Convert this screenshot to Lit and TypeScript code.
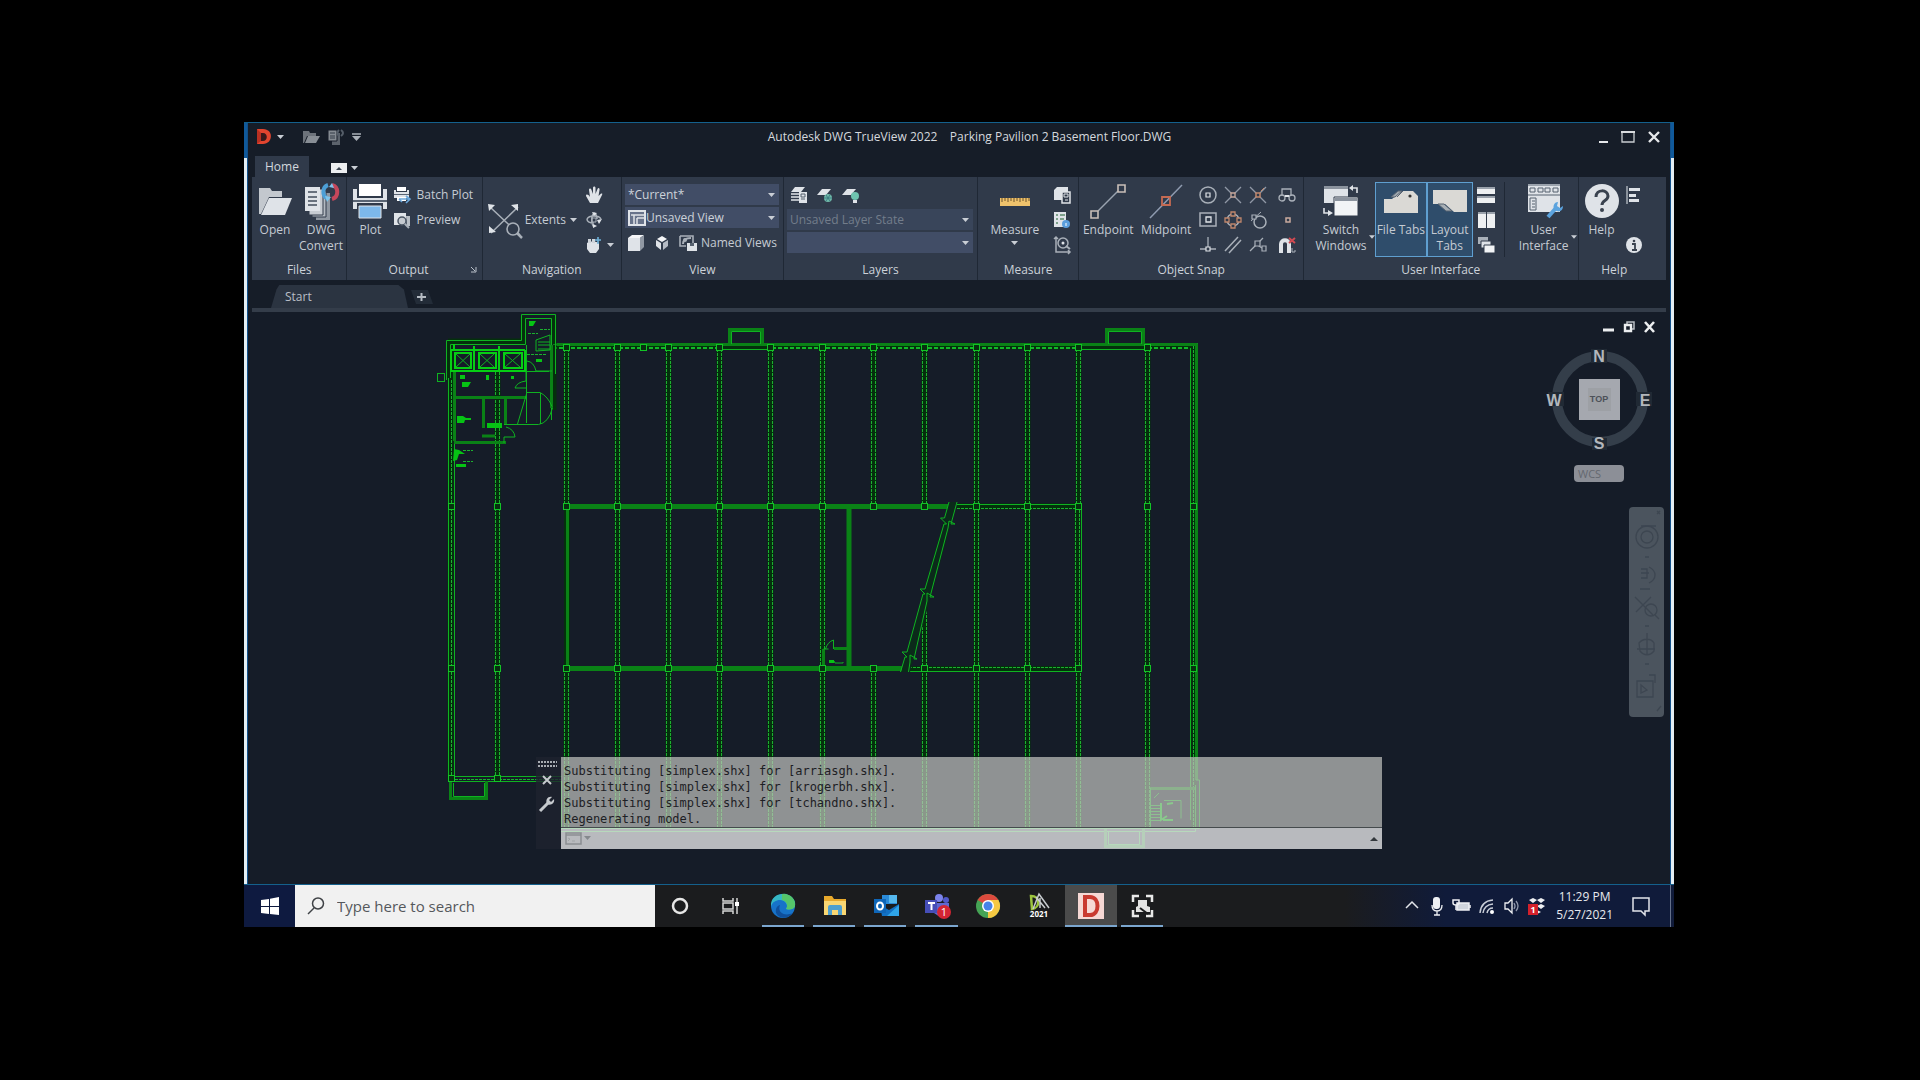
import { LitElement, html, svg, css, type TemplateResult, type SVGTemplateResult } from "lit";
import { customElement } from "lit/decorators.js";
import { classMap } from "lit/directives/class-map.js";

const W = "#dfe3e8";
const G = "#a9b0b9";
const DK = "#303a4a";
const ORANGE = "#c0876c";

/* Large ribbon icons, 36 x 36. Small ribbon icons, 18 x 18. */
const icons: Record<string, SVGTemplateResult> = {
  open: svg`<path d="M2 5h11l2 3h10v6H12L4 31H2z" fill="#c3c8ce"/><path d="M12 15h23l-7 17H4z" fill="${W}"/>`,
  convert: svg`<path d="M13 10h14v27H13z" fill="#8f97a1"/><path d="M9 8h14v26H9z" fill="#b4bac1" stroke="${DK}"/><path d="M6 6h14v26H6z" fill="#c7ccd2" stroke="${DK}"/><path d="M2 4h15v24H2z" fill="${W}"/>
    <path d="M5 9h9M5 14h9M5 18h9M5 22h9" stroke="#69727e" stroke-width="2"/>
    <path d="M25 2c-6 2-6 11-1 13" fill="none" stroke="#4c9fd6" stroke-width="4"/><path d="M29 2c7 2 7 12 0 14" fill="none" stroke="#c4475b" stroke-width="4"/><path d="M22 13l6 1-4 5zM31 5l-5-1 3-4z" fill="#7fc4ea"/>`,
  plot: svg`<path d="M7 1h22v12H7z" fill="#fff"/><path d="M1 6h4v9h26V6h4v20h-4v-6H5v6H1z" fill="${W}"/><path d="M1 17h34v2H1z" fill="#596473"/><path d="M7 23h22v12H7z" fill="#7db8ea" stroke="${W}"/>`,
  extents: svg`<path d="M3 5L33 33M31 5L4 31" stroke="${G}" stroke-width="1.5"/><path d="M1 2l7 1-6 6zM31 2v7l-7-6zM2 31v-7l7 6z" fill="${W}"/><circle cx="26" cy="27" r="6" fill="${DK}" stroke="${G}" stroke-width="1.6"/><path d="M30 31l5 5" stroke="${G}" stroke-width="2.5"/>`,
  measure: svg`<path d="M3 15h30v8H3z" fill="#f0c36c"/><path d="M5 15v4M8 15v3M11 15v4M14 15v3M17 15v4M20 15v3M23 15v4M26 15v3M29 15v4M32 15v3" stroke="#6e552a"/>`,
  endpoint: svg`<path d="M8 28L28 8" stroke="#9aa3b0" stroke-width="1.5"/><path d="M28 2h7v7h-7zM1 28h7v7H1z" fill="none" stroke="#c9bfb8" stroke-width="1.6"/>`,
  midpoint: svg`<path d="M2 35L34 2" stroke="#8f9bb0" stroke-width="1.5"/><path d="M14 14h8v8h-8z" fill="none" stroke="#c56a52" stroke-width="1.8"/>`,
  switch: svg`<path d="M1 3h24v17H1z" fill="${W}"/><path d="M1 3h24v3H1z" fill="#8b939e"/><path d="M11 14h24v19H11z" fill="#f2f4f6" stroke="${DK}"/><path d="M12 15h22v3H12z" fill="#8b939e"/><path d="M34 10V5h-6M1 25v5h6" fill="none" stroke="${W}" stroke-width="1.6"/><path d="M30 2v6l-4-3zM5 27v6l5-3z" fill="${W}"/>`,
  filetabs: svg`<path d="M1 30V16h8l9-8h12l5 5v17z" fill="#dad9d5"/><path d="M8 14l7-6h4l-7 6zM14 14l6-6" fill="#9da6ad" stroke="#566271"/><circle cx="27" cy="13" r="1.6" fill="#333"/>`,
  layouttabs: svg`<path d="M1 7h34v22H22l-9-8H1z" fill="#dad9d5"/><path d="M6 21h6l8 7h-6z" fill="#a7afb5" stroke="#566271"/>`,
  ui: svg`<path d="M2 1h32v28H2z" fill="${W}"/><path d="M2 1h32v2H2z" fill="#9aa2ac"/><path d="M4 5h5v4H4zM12 5h5v4h-5zM19 5h5v4h-5zM27 5h5v4h-5z" fill="none" stroke="#55606e"/><path d="M2 12h32" stroke="#55606e"/><path d="M4 15h6v12H4z" fill="none" stroke="#55606e"/><path d="M6 18h3M6 21h3M6 24h3" stroke="#55606e"/><path d="M22 34l8-9" stroke="#5ba3de" stroke-width="4"/><path d="M29 27c-3-3-1-8 3-8l-1 4 3 2 3-2c0 5-4 7-8 4z" fill="#5ba3de"/>`,
  help: svg`<circle cx="18" cy="18" r="17" fill="${W}"/><path d="M12 14c0-8 12-8 12-1 0 5-6 4-6 9" fill="none" stroke="#39424f" stroke-width="3"/><circle cx="18" cy="27" r="2" fill="#39424f"/>`,
  batch: svg`<path d="M4 1h9v4H4z" fill="#fff"/><path d="M1 4h2v2h11V4h2v8H1z" fill="${W}"/><path d="M1 8h15v1H1z" fill="#596473"/><path d="M4 11h9v4H4z" fill="#fff"/><path d="M6 13h10M13 10l4 3-4 4M9 16l-3-3" stroke="#6ba8dc" stroke-width="1.6" fill="none"/>`,
  preview: svg`<path d="M1 2h12v12H1z" fill="${W}"/><path d="M13 5h4v10h-3zM3 3l9 0" fill="#b9bfc6"/><circle cx="9" cy="10" r="4" fill="#c5cad0" stroke="#4a5563" stroke-width="1.5"/><path d="M12 13l4 4" stroke="${G}" stroke-width="2"/>`,
  pan: svg`<path d="M5 17L1 10c0-2 2-2 4 1L4 4c0-2 2-2 2.500 0L8 8V2c0-2 2.500-2 2.500 0V8l2-5c.6-2 2.500-1 2 1l-1 6 2-2c2-1 2 0 1.500 1L13 17z" fill="${W}"/>`,
  orbit: svg`<path d="M9 2c-3 3-3 11 0 14M9 2c2 1 3 4 3 6M2 8c2-4 12-4 14 0M2 8c0 3 4 4 7 4" fill="none" stroke="${G}" stroke-width="1.5"/><path d="M7 1l5 1-3 3zM17 8l-3 5-2-4zM12 15l-4 2v-4z" fill="${W}"/><path d="M7 7h4v4H7z" fill="none" stroke="${G}"/>`,
  wheel: svg`<path d="M2 7c3-2 9-2 12 0v6l-3 4H5l-3-4z" fill="${W}"/><path d="M3 3h3v4H3zM7 3h3v4H7z" fill="#cfd4da"/><path d="M10 4h6M13 1v7" stroke="#6fb1d8" stroke-width="1.6"/>`,
  cube: svg`<path d="M1 4h12v13H1z" fill="${W}"/><path d="M1 4l4-3h12l-4 3z" fill="#f4f5f7"/><path d="M13 4l4-3v12l-4 4z" fill="#9098a3"/>`,
  cubeiso: svg`<path d="M9 2l5 3-5 3-5-3z" fill="#f4f5f7"/><path d="M3 6l5 3v7l-5-4z" fill="${W}"/><path d="M15 6l-5 3v7l5-4z" fill="#b5bbc4"/>`,
  named: svg`<path d="M1 2h13v9M1 2v10h6" fill="none" stroke="${G}" stroke-width="1.6"/><path d="M4 10c0-4 3-6 8-6" fill="none" stroke="${G}" stroke-width="2"/><circle cx="6" cy="6" r="2" fill="${G}"/><path d="M8 9h10v8H8z" fill="${W}"/><path d="M11 9h4v3h-4z" fill="#55606e"/>`,
  layerprops: svg`<path d="M5 1h10l-4 5H1z" fill="${W}"/><path d="M1 8h8M1 11h8M1 14h8" stroke="${W}" stroke-width="1.5"/><path d="M9 6h8v11H9z" fill="${W}"/><path d="M11 8h4v3h-4zM11 13h4" stroke="#55606e" fill="none"/>`,
  layerfreeze: svg`<path d="M6 3h9l-5 6H1z" fill="${W}"/><circle cx="12" cy="12" r="4" fill="#6fb8a8"/><path d="M8 12h8M10 9l4 6M14 9l-4 6" stroke="#3f7f84"/>`,
  layeroff: svg`<path d="M5 3h9l-5 6H0z" fill="${W}"/><circle cx="13" cy="10" r="4" fill="#6fc3b0"/><path d="M11 14h4v3h-4z" fill="${W}"/>`,
  quickcalc: svg`<path d="M1 4l3-3h11v6H9v7H1z" fill="${W}"/><path d="M9 6h8v11H9z" fill="${DK}" stroke="${W}" stroke-width="1.5"/><path d="M11 8h4v3h-4zM12 14h3" stroke="${W}" fill="none"/>`,
  listinfo: svg`<path d="M1 1h12v15H1z" fill="${W}"/><path d="M3 4h2M7 4h5M3 8h2M7 8h4M3 12h2" stroke="#5e8c6c" stroke-width="1.5"/><circle cx="13" cy="13" r="4" fill="#5b9ede"/><path d="M13 12v3" stroke="#fff"/>`,
  locate: svg`<path d="M3 1v15h14M1 3l2-2 2 2M15 14l2 2-2 2" fill="none" stroke="${G}" stroke-width="1.5"/><circle cx="10" cy="7" r="5" fill="none" stroke="${G}" stroke-width="1.5"/><circle cx="10" cy="7" r="1.500" fill="${W}"/><path d="M13 10l4 3" stroke="${G}" stroke-width="2"/>`,
  center: svg`<circle cx="9" cy="9" r="8" fill="none" stroke="${G}" stroke-width="1.5"/><path d="M7 7h4v4H7z" fill="none" stroke="${W}" stroke-width="1.2"/>`,
  inter: svg`<path d="M1 1l16 16M17 1L1 17" stroke="#9098a6" stroke-width="1.3"/><path d="M7 7h4v4H7z" fill="${DK}" stroke="#c8a79a" stroke-width="1.3"/>`,
  appint: svg`<path d="M1 1l16 16M17 1L1 17" stroke="#9098a6" stroke-width="1.3"/><path d="M7 7h4v4H7z" fill="${DK}" stroke="${ORANGE}" stroke-width="1.5"/><path d="M12 5l3-3" stroke="${ORANGE}"/>`,
  insert: svg`<path d="M4 10V3h9v7" fill="none" stroke="${G}" stroke-width="1.3"/><circle cx="4" cy="12" r="3" fill="none" stroke="${G}" stroke-width="1.3"/><circle cx="14" cy="12" r="3" fill="none" stroke="${G}" stroke-width="1.3"/><path d="M7 10h4" stroke="${W}" stroke-width="2"/>`,
  geo: svg`<path d="M1 2h16v13H1z" fill="none" stroke="${G}" stroke-width="1.5"/><path d="M7 6h5v5H7z" fill="none" stroke="${W}" stroke-width="1.3"/>`,
  quadrant: svg`<circle cx="9" cy="9" r="6" fill="none" stroke="${G}" stroke-width="1.4"/><path d="M7 1h4v4H7zM7 13h4v4H7zM1 7h4v4H1zM13 7h4v4h-4z" fill="${DK}" stroke="${ORANGE}" stroke-width="1.3"/>`,
  tangent: svg`<circle cx="11" cy="11" r="6" fill="none" stroke="${G}" stroke-width="1.5"/><path d="M2 10L12 1" stroke="${G}"/><path d="M3 4h4v4H3z" fill="${DK}" stroke="${G}" stroke-width="1.2"/>`,
  node: svg`<path d="M8 7h4v4H8z" fill="none" stroke="#c9aa9f" stroke-width="1.5"/>`,
  perp: svg`<path d="M9 1v10M1 13h16" stroke="${G}" stroke-width="1.3"/><path d="M7 11h4v4H7z" fill="${DK}" stroke="${W}" stroke-width="1.2"/>`,
  parallel: svg`<path d="M1 15L14 1M5 17L17 4" stroke="${G}" stroke-width="1.5"/>`,
  nearest: svg`<path d="M1 15L14 2M7 8l6 4" stroke="${G}" stroke-width="1.3"/><path d="M6 5h5v5H6zM13 10h4v5h-4z" fill="${DK}" stroke="${G}" stroke-width="1.2"/>`,
  nosnap: svg`<path d="M3 17V8c0-5 8-5 8 0v9" fill="none" stroke="${W}" stroke-width="4"/><path d="M11 2l6 5M17 2l-6 5" stroke="#d04a52" stroke-width="2"/><path d="M14 12v4h3v-2" fill="none" stroke="${G}"/>`,
  tileh: svg`<path d="M0 1h18v7H0zM0 10h18v7H0z" fill="#eef0f2"/><path d="M0 1h18v2H0zM0 10h18v2H0z" fill="#9aa2ac"/>`,
  tilev: svg`<path d="M1 1h8v16H1zM10 1h8v16h-8z" fill="#eef0f2"/><path d="M1 1h8v2H1zM10 1h8v2h-8z" fill="#9aa2ac"/>`,
  cascade: svg`<path d="M1 1h10v7H1z" fill="${G}"/><path d="M4 5h10v7H4z" fill="${W}" stroke="${DK}"/><path d="M7 9h11v8H7z" fill="#f2f4f6" stroke="${DK}"/>`,
  align: svg`<path d="M2 0v18" stroke="${G}" stroke-width="1.5"/><path d="M4 2h11v3H4zM4 8h7v3H4zM4 13h10v3H4z" fill="${W}"/>`,
  info: svg`<circle cx="9" cy="9" r="8" fill="${W}"/><path d="M7 8h3v6M7 14h5" stroke="#39424f" stroke-width="1.8" fill="none"/><circle cx="9" cy="5" r="1.300" fill="#39424f"/>`,
  savedview: svg`<path d="M1 2h16v14H1z" fill="#68738a" stroke="${W}" stroke-width="2"/><path d="M3 6h13M6 6v9M9 9h7M9 9v6" fill="none" stroke="${W}" stroke-width="1.5"/>`,
};

const icon = (name: string, size: number): TemplateResult => html`<svg
  width=${size} height=${size} viewBox="0 0 ${size} ${size}" aria-hidden="true">${icons[name]}</svg>`;

const caret = html`<svg class="caret" width="7" height="4" viewBox="0 0 7 4" aria-hidden="true">
  <path d="M0 0h7L3.500 4z" fill="#c9ced5" /></svg>`;

const base = css`
  * { box-sizing: border-box; }
  svg { display: block; flex: none; overflow: visible; }
  button, input, select {
    font: inherit; color: inherit; background: none; border: 0; margin: 0; padding: 0; border-radius: 0; outline: none;
  }
  button { display: flex; align-items: center; justify-content: center; white-space: nowrap; }
`;

@customElement("ribbon-bar")
class RibbonBar extends LitElement {
  static styles = [base, css`
    :host { display: flex; margin: 0 4px; background: #303a4a; color: #c5cbd3; font-size: 12px; line-height: 16px; }
    .panel { display: flex; flex-direction: column; min-width: 0; border-right: 1px solid #1f2835; }
    .panel:last-child { border-right: 0; }
    .files { flex: 95 1 0; } .output { flex: 135 1 0; } .nav { flex: 139 1 0; } .view { flex: 162 1 0; }
    .layers { flex: 194 1 0; } .measure { flex: 101 1 0; } .snap { flex: 225 1 0; } .ui { flex: 275 1 0; } .help { flex: 88 1 0; }
    .body { display: flex; height: 82px; padding-top: 5px; }
    .measure .body, .ui .body { padding-left: 3px; }
    h2 { margin: 0; padding: 3px 0 2px; text-align: center; font-size: 12px; line-height: 16px; font-weight: 400; color: #ccd2d9; }
    .help h2 { padding-right: 16px; }
    .caption { display: flex; align-items: center; }
    .caption h2 { flex: 1; padding-left: 4px; }
    .launch { width: 16px; }
    .big { flex-direction: column; justify-content: flex-start; gap: 3px; height: 75px; width: 46px; padding-top: 1px; text-align: center; white-space: normal; }
    .wide { width: 58px; }
    .xwide { width: 68px; }
    .toggle { width: 52px; padding-top: 0; background: #2f4d6b; border: 1px solid #5f9fd0; }
    .narrow { width: 46px; }
    .col { display: flex; flex-direction: column; }
    .row { display: flex; align-items: center; height: 25px; gap: 4px; }
    .item { height: 25px; gap: 5px; justify-content: flex-start; }
    .center { height: 75px; gap: 2px; padding: 0 8px 0 4px; }
    .center .caret { margin-left: 2px; }
    .grid { display: grid; grid-template: repeat(3, 25px) / 25px 25px 25px 33px; }
    .stack { flex: 1; padding: 0 4px 0 3px; min-width: 0; }
    .views { gap: 8px; justify-content: flex-start; padding-left: 2px; }
    .views .item { gap: 4px; }
    .tools { gap: 8px; padding-left: 3px; }
    .field { position: relative; display: flex; align-items: center; height: 21px; margin: 2px 0; padding-left: 3px; background: #414d66; }
    .field select { appearance: none; flex: 1; min-width: 0; height: 21px; color: #cdd3da; }
    .field .caret { position: absolute; right: 4px; top: 9px; pointer-events: none; }
    .disabled { background: #39455a; }
    .disabled select { color: #737d8b; opacity: 1; }
    .gapcol { width: 26px; align-items: center; }
    .gapcol button, .grid button { height: 25px; }
    .rule { width: 1px; height: 75px; margin: 0 5px; background: #1f2835; }
    .hang { position: relative; }
    .hang .caret { position: absolute; right: 0; bottom: 18px; width: 6px; }
    .drop { display: flex; flex-direction: column; align-items: center; gap: 3px; }
  `];

  private big(name: string, text: string, cls = "") {
    return html`<button class="big ${cls}">${icon(name, 36)}<span>${text}</span></button>`;
  }
  private small(name: string, label: string) {
    return html`<button aria-label=${label}>${icon(name, 18)}</button>`;
  }

  render() {
    const snaps = [
      ["center", "Center"], ["inter", "Intersection"], ["appint", "Apparent intersection"], ["insert", "Insertion"],
      ["geo", "Geometric center"], ["quadrant", "Quadrant"], ["tangent", "Tangent"], ["node", "Node"],
      ["perp", "Perpendicular"], ["parallel", "Parallel"], ["nearest", "Nearest"], ["nosnap", "No snap"],
    ];
    return html`
      <section class="panel files">
        <div class="body">${this.big("open", "Open")}${this.big("convert", "DWG Convert")}</div>
        <h2>Files</h2>
      </section>
      <section class="panel output">
        <div class="body">
          ${this.big("plot", "Plot")}
          <div class="col">
            <button class="item">${icon("batch", 18)}Batch Plot</button>
            <button class="item">${icon("preview", 18)}Preview</button>
          </div>
        </div>
        <div class="caption"><h2>Output</h2>
          <button class="launch" aria-label="Output settings"><svg width="7" height="7" viewBox="0 0 7 7"><path d="M1 1l4 4M6 1v5H1" fill="none" stroke="#b9c0c9" /></svg></button>
        </div>
      </section>
      <section class="panel nav">
        <div class="body">
          <button class="center">${icon("extents", 36)}Extents${caret}</button>
          <div class="col">
            <div class="row">${this.small("pan", "Pan")}</div>
            <div class="row">${this.small("orbit", "Orbit")}</div>
            <div class="row">${this.small("wheel", "Navigation wheel")}<button aria-label="More wheels">${caret}</button></div>
          </div>
        </div>
        <h2>Navigation</h2>
      </section>
      <section class="panel view">
        <div class="body">
          <div class="stack">
            <div class="field"><select aria-label="Visual style"><option>*Current*</option></select>${caret}</div>
            <div class="field">${icon("savedview", 18)}<select aria-label="View"><option>Unsaved View</option></select>${caret}</div>
            <div class="row views">${this.small("cube", "Top view")}${this.small("cubeiso", "Isometric view")}
              <button class="item">${icon("named", 18)}Named Views</button></div>
          </div>
        </div>
        <h2>View</h2>
      </section>
      <section class="panel layers">
        <div class="body">
          <div class="stack">
            <div class="row tools">${this.small("layerprops", "Layer properties")}${this.small("layerfreeze", "Freeze layer")}${this.small("layeroff", "Turn layer off")}</div>
            <div class="field disabled"><select aria-label="Layer state" disabled><option>Unsaved Layer State</option></select>${caret}</div>
            <div class="field"><select aria-label="Layer"><option></option></select>${caret}</div>
          </div>
        </div>
        <h2>Layers</h2>
      </section>
      <section class="panel measure">
        <div class="body">
          <button class="big xwide">${icon("measure", 36)}<span class="drop">Measure${caret}</span></button>
          <div class="col gapcol">${this.small("quickcalc", "Calculator")}${this.small("listinfo", "List")}${this.small("locate", "Locate point")}</div>
        </div>
        <h2>Measure</h2>
      </section>
      <section class="panel snap">
        <div class="body">
          ${this.big("endpoint", "Endpoint", "wide")}${this.big("midpoint", "Midpoint", "wide")}
          <div class="grid">${snaps.map(([n, l]) => this.small(n, l))}</div>
        </div>
        <h2>Object Snap</h2>
      </section>
      <section class="panel ui">
        <div class="body">
          <button class="big xwide hang">${icon("switch", 36)}<span>Switch Windows</span>${caret}</button>
          ${this.big("filetabs", "File Tabs", "toggle")}${this.big("layouttabs", "Layout Tabs", "toggle narrow")}
          <div class="col gapcol">${this.small("tileh", "Tile horizontally")}${this.small("tilev", "Tile vertically")}${this.small("cascade", "Cascade")}</div>
          <div class="rule"></div>
          <button class="big xwide hang">${icon("ui", 36)}<span>User Interface</span>${caret}</button>
        </div>
        <h2>User Interface</h2>
      </section>
      <section class="panel help">
        <div class="body">
          ${this.big("help", "Help")}
          <div class="col"><div class="row">${this.small("align", "Align")}</div><div class="row"></div><div class="row">${this.small("info", "About")}</div></div>
        </div>
        <h2>Help</h2>
      </section>`;
  }
}

/* Floor plan, drawn in a 1422 x 572 field whose origin is at 248, 312. */
const BAYS = [567, 618, 669, 720, 771, 823, 874, 925, 977, 1028, 1079];

function dashedPair(x: number, y1: number, y2: number): SVGTemplateResult {
  return svg`<path class="halo" d="M${x - 0.5} ${y1}V${y2}"/><path class="dash" d="M${x - 2.5} ${y1}V${y2}M${x + 1.5} ${y1}V${y2}"/>`;
}
function node(x: number, y: number): SVGTemplateResult {
  return svg`<rect class="node" x=${x - 3.5} y=${y - 2.5} width="6" height="6"/>`;
}

@customElement("floor-plan")
class FloorPlan extends LitElement {
  static styles = css`
    :host { display: block; height: 100%; }
    svg { display: block; width: 100%; height: 100%; }
    path, rect { fill: none; }
    .halo { stroke: #04300c; stroke-width: 6; }
    .dash { stroke: #1bb02f; stroke-dasharray: 3 1; }
    .hdash { stroke: #12b827; stroke-dasharray: 4 2; stroke-width: 2; }
    .solid { stroke: #0a8216; stroke-width: 5; }
    .wall { stroke: #0a8216; stroke-width: 3; }
    .line { stroke: #0fb321; }
    .bright { stroke: #06cf14; stroke-width: 2; }
    .fill { fill: #06c414; }
    .node { stroke: #12c426; fill: #07300f; }
    .break { fill: #0b2a1a; stroke: none; }
  `;
  render() {
    const upper = [...BAYS, 1148];
    return html`<svg viewBox="248 312 1422 572" role="img" aria-label="Basement floor plan">
      ${upper.map((x) => dashedPair(x, 349, 506))}
      ${BAYS.filter((x) => ![567, 874, 925, 1079].includes(x)).map((x) => dashedPair(x, 506, 669))}
      ${dashedPair(925, 603, 669)}${dashedPair(1148, 506, 828)}${dashedPair(1078, 506, 669)}
      ${dashedPair(498, 372, 778)}
      ${BAYS.map((x) => dashedPair(x, 669, 828))}

      <path class="halo" d="M450.500 346V780M1194 344V828M553 346.500H1196" />
      <path class="line" d="M448.500 378V781M454.500 378V777M448.500 781.500H561.500M454.500 776.500H561.500M561.500 781V829.500M555 343.500H1197.500V780M1190.500 348V820M720 349.500H772M1079 349.500H1148" />
      <path class="wall" d="M553 344.500H1197M1196.500 344V780" />
      <path class="dash" d="M451.500 380V778M1193.500 346V828M455 779.500H561" />
      <path class="hdash" d="M553 348H720M772 348H1079M1148 348H1190" />
      <path class="line" d="M561 828.500H1199.500V780H1196M561 831.500H1195.500V785" />

      <path class="solid" d="M567 506.500H948M567 668.500H902M849 506V669" />
      <path class="halo" d="M567 509V666" /><path class="wall" d="M567.500 509V666" />
      <path class="halo" d="M957 506.500H1079M909 669H1079" />
      <path class="line" d="M957 504.500H1079M909 671.500H1079M1081.500 506V670" />
      <path class="dash" d="M957 508.500H1079M909 667.500H1079" />
      <path class="break" d="M949 502h8L910 672h-9z" />
      <path class="line" d="M949 502L944.500 518l-4 0l6 6h-2.500L925 589l-5 0l5 5h-2L907 652l-5 0l5 5h-2L900.500 672
        M957 502L951 524l4 0l-6-3l-1 7L930 597l4 0l-7-4l0 8L914 659l3 0l-7-4l0 7L908.500 672" />
      <path class="wall" d="M834 648.500H850M823.500 649V669" />
      <path class="line" d="M823.500 649h5M833.500 649v-9q-6 2-8 9M829 661h5l1 2h8v-1" />
      <path class="fill" d="M829 660h5v3h-5z" />

      <path class="wall" d="M729.500 346V329.500H762.500V346M1106.500 346V329.500H1143.500V346" />
      <path class="line" d="M731.500 344V331.500H760.500V344M1108.500 344V331.500H1141.500V344" />
      <path class="wall" d="M450.500 781V798.500H486.500V781M1105.500 829V846.500H1143.500V829" />
      <path class="line" d="M453.500 783V796.500H484.500V783M1108.500 832V844.500H1139.500V832" />

      ${[...upper, 644].map((x) => node(x, 347))}
      ${[...BAYS, 498, 1148].map((x) => svg`${node(x, 506)}${node(x, 668)}`)}
      ${[452, 1194].map((x) => svg`${node(x, 506)}${node(x, 668)}`)}
      ${node(498, 778)}${node(452, 778)}

      <path class="halo" d="M523.500 316V345M553.500 316V344M448 341.500H524M449.500 341V378M553.500 345V410" />
      <path class="line" d="M446.500 380V340.500H521.500V314.500H555.500V345M450.500 378V344.500H525.500V318.500H551.500V420M555.500 345V374" />
      <path class="line" d="M526.500 345V423M549 371.500H525" />
      <rect class="line" x="437.500" y="373.500" width="7" height="8" />
      <path class="bright" d="M451 350H525M451 371H525M451 350V372M474 346V372M499 346V372M525 350V372M454 344V350" />
      <path class="bright" d="M455 353h16v15h-16zM479 353h17v15h-17zM504 353h18v15h-18z" />
      <path class="line" d="M456 354l14 13M470 354l-14 13M480 354l14 13M494 354l-14 13M505 354l15 13M520 354l-15 13" />
      <path class="wall" d="M454 397.500H526M454.500 372V441M483.500 398V428M505.500 398V425M454 442.500H506M482 436h13M551.500 345V408" />
      <path class="line" d="M552.500 408q-4 15-14 16.500H504M526 392.500h14q8 4 12 14M540.500 393V424M517.500 424l9-30M526 372v9q-9 1-11 7h11M527 361q7 1 9 10h16M506 427q8 2 9 10h-11v6" />
      <path class="fill" d="M529 321h7l-3 5h-4zM460 375h5v4h-5zM486 375h3v5h-3zM511 376h3v3h-3zM462 382h9l-3 5h-6zM457 416h6l3 2h5v2h-6l-1 3h-7zM487 423h15v5h-15zM536 359h6v3h-6zM454 449l5 1 6 4h-6l-2 6-4 1zM456 464h10v3h-10z" />
      <path class="dash" d="M528 333.500h10M540 329.500h10M527 354.500h20M463 450.500h10M463 461.500h10" />
      <path class="line" d="M538 342h12M538 345h12M538 349h12M536 340l14-5v15l-14 1z" />
      <path class="wall" d="M1150 788.500H1195" />
      <path class="line" d="M1151 805.500h10M1151 808.500h10M1151 811.500h10M1151 814.500h10M1151 817.500h10M1151 820.500h10M1164 800.500h17v18M1154 798l5-5M1150.500 788v40" />
      <path class="bright" d="M1161 803v17l6-4M1167 804l6-1M1163 820h10" />
    </svg>`;
  }
}

@customElement("command-line")
class CommandLine extends LitElement {
  static styles = [base, css`
    :host { display: flex; font: 12px/16px "DejaVu Sans Mono", "Liberation Mono", monospace; color: #1d2024; }
    .grip { display: flex; flex-direction: column; align-items: center; gap: 8px; width: 25px; padding: 4px 3px 0 0; background: rgba(30, 35, 46, 0.8); }
    .main { flex: 1; min-width: 0; }
    .history { margin: 0; padding: 6px 3px 0; height: 71px; background: rgba(195, 196, 193, 0.7); border-bottom: 1px solid #454b4d; }
    .history p { margin: 0; white-space: pre; }
    .entry { display: flex; align-items: center; height: 21px; padding: 0 4px; gap: 3px; background: rgba(225, 226, 228, 0.8); }
    .entry input { flex: 1; min-width: 0; }
  `];
  render() {
    const lines = [
      "Substituting [simplex.shx] for [arriasgh.shx].",
      "Substituting [simplex.shx] for [krogerbh.shx].",
      "Substituting [simplex.shx] for [tchandno.shx].",
      "Regenerating model.",
    ];
    return html`
      <div class="grip">
        <svg width="19" height="6" viewBox="0 0 19 6"><path d="M0 1h19M0 5h19" stroke="#a7acb2" stroke-width="2" stroke-dasharray="2 1" /></svg>
        <button aria-label="Close command line"><svg width="10" height="10" viewBox="0 0 10 10"><path d="M1 1l8 8M9 1L1 9" stroke="#c6cace" stroke-width="2" /></svg></button>
        <button aria-label="Customize"><svg width="16" height="20" viewBox="0 0 16 20"><path d="M1 18l9-9" stroke="#c6cace" stroke-width="3" /><path d="M8 11c-2-4 1-8 5-7l-3 3 2 2 3-3c1 4-3 7-7 5z" fill="#c6cace" /></svg></button>
      </div>
      <div class="main">
        <div class="history">${lines.map((l) => html`<p>${l}</p>`)}</div>
        <div class="entry">
          <button aria-label="Recent commands"><svg width="27" height="13" viewBox="0 0 27 13"><path d="M1 1h15v11H1zM1 3h15" fill="none" stroke="#8a8e92" stroke-width="1.5" /><path d="M3 6l2 1-2 2M7 9h3" fill="none" stroke="#a0a4a7" /><path d="M19 4h7l-3.500 4z" fill="#85898d" /></svg></button>
          <input aria-label="Command" />
          <button aria-label="Expand history"><svg width="8" height="4" viewBox="0 0 8 4"><path d="M0 4h8L4 0z" fill="#33383c" /></svg></button>
        </div>
      </div>`;
  }
}

@customElement("task-bar")
class TaskBar extends LitElement {
  static styles = [base, css`
    :host { display: flex; height: 42px; color: #e8eaee; background: linear-gradient(90deg, #1b1c1e 0 77%, #101b3a 84%); font-size: 12px; line-height: 18px; }
    .start { width: 51px; background: #0e1a40; }
    .search { display: flex; align-items: center; gap: 12px; flex: 360 1 0; max-width: 360px; padding-left: 12px; background: #f1f1f1; color: #55585c; font-size: 15px; }
    .search input { flex: 1; min-width: 0; height: 42px; }
    .search input::placeholder { color: #55585c; opacity: 1; }
    .apps { display: flex; flex: 0 0 513px; }
    .app { flex: 1; position: relative; }
    .running::after { content: ""; position: absolute; left: 4px; right: 5px; bottom: 0; height: 2px; background: #7ba6cf; }
    .active { background: #4b4b4b; }
    .active::after { left: 0; right: 0; }
    .tray { display: flex; align-items: center; margin-left: auto; }
    .tray button { width: 25px; height: 42px; }
    .clock { padding: 0 7px; text-align: center; }
    .tray .note { width: 42px; margin-right: 8px; }
    .desktop { width: 4px; height: 42px; border-left: 1px solid #64708a; }
  `];
  render() {
    const s = (w: number, body: SVGTemplateResult) => html`<svg width=${w} height=${w} viewBox="0 0 ${w} ${w}" aria-hidden="true">${body}</svg>`;
    const apps: [string, string, SVGTemplateResult][] = [
      ["Cortana", "", svg`<circle cx="12" cy="13" r="7" fill="none" stroke="#e6e6e6" stroke-width="2.500"/>`],
      ["Task view", "", svg`<path d="M4 5v3h10V5M4 21v-3h10v3M4 10h10v6H4z" fill="none" stroke="#d5d5d5" stroke-width="1.500"/><path d="M18 5v16" stroke="#d5d5d5" stroke-width="1.500"/><path d="M16 9h4v4h-4z" fill="#fff"/>`],
      ["Edge", "running", svg`<circle cx="13" cy="13" r="12" fill="#1773c9"/><path d="M1 14C0 3 10 0 16 1c7 2 10 7 9 12-1 3-5 4-9 3 3-4-1-9-6-9-4 0-8 2-9 7z" fill="#35b7c4"/><path d="M12 1c8-1 14 5 13 12-1 4-6 4-9 3 3-4 0-8-4-9z" fill="#55c56a"/><path d="M10 12c-3 7 4 12 13 8-6 8-19 5-17-4 1-3 3-4 4-4z" fill="#0f4f9c"/>`],
      ["File Explorer", "running", svg`<path d="M2 3h8l2 3h12v16H2z" fill="#e8a92c"/><path d="M2 8h22v14H2z" fill="#f8d672"/><path d="M6 22v-8q0-2 2-2h10q2 0 2 2v8h-4v-5h-6v5z" fill="#4d9fcf"/>`],
      ["Outlook", "running", svg`<path d="M9 2h15v9H9z" fill="#2a8ad8"/><path d="M16 2h8v8h-8z" fill="#55b8ee"/><path d="M7 12l9 5 10-6v12H9z" fill="#1271c4"/><path d="M14 23l12-11v11z" fill="#2fa4e8"/><path d="M1 6h12v14H1z" fill="#0f66b8"/><ellipse cx="7" cy="13" rx="3" ry="3.600" fill="none" stroke="#fff" stroke-width="2"/>`],
      ["Teams", "running", svg`<circle cx="15" cy="5" r="4" fill="#7b83eb"/><circle cx="22" cy="7" r="3" fill="#5059c9"/><path d="M10 10h15v10q-7 7-15 0z" fill="#6068d0"/><path d="M1 7h12v13H1z" fill="#464eb8"/><path d="M4 10h7M7.500 10v7" stroke="#fff" stroke-width="2"/><circle cx="20" cy="19" r="7" fill="#d42533"/><text x="20" y="23" text-anchor="middle" font-size="11" fill="#fff">1</text>`],
      ["Chrome", "", svg`<circle cx="13" cy="13" r="12" fill="#45a355"/><path d="M13 13L2.600 7a12 12 0 0 1 20.800 0z" fill="#dc4a3d"/><path d="M13 13L23.400 7A12 12 0 0 1 13 25z" fill="#f5c842"/><path d="M13 7h10.400L19 16z" fill="#f5c842"/><circle cx="13" cy="13" r="6" fill="#fff"/><circle cx="13" cy="13" r="4.500" fill="#4583e8"/>`],
      ["Design Assistant", "", svg`<path d="M4 3c10 0 9 12 1 13z" fill="none" stroke="#9cc43e" stroke-width="2.500"/><path d="M6 16l6-15 10 14M9 4l9 11M13 5v10" fill="none" stroke="#c9cdd0" stroke-width="1.500"/><text x="12" y="24" text-anchor="middle" font-size="8" font-weight="700" fill="#fff">2021</text>`],
      ["DWG TrueView", "running active", svg`<path d="M0 0h26v26H0z" fill="#f6d8d4"/><path d="M7 4h5c10 0 10 18 0 18H7z" fill="none" stroke="#c93a30" stroke-width="4"/>`],
      ["Screen capture", "running", svg`<path d="M4 9V3h6M17 3h6v6M23 17v6h-6M10 23H4v-6" fill="none" stroke="#e8e8e8" stroke-width="2.500"/><path d="M9 7h9v6l3 1v5H7v-5l2-1z" fill="#e3e3e3"/><path d="M11 15l8 6" stroke="#1b1c1e" stroke-width="2"/>`],
    ];
    const tray: [string, SVGTemplateResult][] = [
      ["Hidden icons", svg`<path d="M4 12l6-6 6 6" fill="none" stroke="#e2e5ea" stroke-width="1.500"/>`],
      ["Microphone", svg`<rect x="6" y="1" width="7" height="12" rx="3" fill="#eef0f3"/><path d="M5 9q0 6 5 6t5-6M10 15v4M7 19h6" fill="none" stroke="#eef0f3" stroke-width="1.300"/>`],
      ["Battery", svg`<path d="M5 7h12v7H5z" fill="#cfd4dc" stroke="#eef0f3" stroke-width="1.500"/><path d="M18 9v3M1 4h6v3q0 2-3 2T1 7zM4 9v5" fill="none" stroke="#eef0f3" stroke-width="1.500"/>`],
      ["Network", svg`<path d="M3 17Q4 5 16 4M6 17Q7 9 16 8M10 17q1-5 6-5" fill="none" stroke="#c9ced8" stroke-width="1.500"/><circle cx="15" cy="16" r="2" fill="#fff"/>`],
      ["Volume", svg`<path d="M3 7h3l4-4v14l-4-4H3z" fill="none" stroke="#eef0f3" stroke-width="1.300"/><path d="M12 7q2 3 0 6M14 5q4 5 0 10" fill="none" stroke="#8f97ab" stroke-width="1.300"/>`],
      ["Dropbox", svg`<path d="M6 2l4 2-4 3-4-3zM14 2l4 2-4 3-4-3zM14 8l4 2-4 3-4-3zM10 14l4 2-4 2z" fill="#eef0f3"/><path d="M1 8h10v11H1z" fill="#d3202b"/><text x="6" y="17" text-anchor="middle" font-size="9" font-weight="700" fill="#fff">1</text>`],
    ];
    return html`
      <button class="start" aria-label="Start">${s(18, svg`<path d="M0 3l8-1v7H0zM9 1.800L18 0v9H9zM0 10h8v7l-8-1zM9 10h9v8l-9-1z" fill="#fff"/>`)}</button>
      <label class="search">${s(18, svg`<circle cx="11" cy="6.500" r="5.500" fill="none" stroke="#3f4246" stroke-width="1.500"/><path d="M7 11l-6 6" stroke="#3f4246" stroke-width="1.500"/>`)}
        <input type="search" placeholder="Type here to search" aria-label="Search" /></label>
      <div class="apps">${apps.map(([n, c, b]) => html`<button class="app ${classMap({ running: c.includes("running"), active: c.includes("active") })}" aria-label=${n}>${s(26, b)}</button>`)}</div>
      <div class="tray">
        ${tray.map(([n, b]) => html`<button aria-label=${n}>${s(20, b)}</button>`)}
        <div class="clock">11:29 PM<br />5/27/2021</div>
        <button class="note" aria-label="Notifications">${s(20, svg`<path d="M2 2h16v13h-4v4l-4-4H2z" fill="none" stroke="#e2e5ea" stroke-width="1.500"/>`)}</button>
        <div class="desktop"></div>
      </div>`;
  }
}

@customElement("app-root")
class AppRoot extends LitElement {
  static styles = [base, css`
    :host {
      display: flex; flex-direction: column; min-height: 100vh; box-sizing: border-box; padding: 122px 246px 153px 244px;
      background: #000; font-family: "Open Sans", "Noto Sans", sans-serif; font-size: 12px; line-height: 16px; color: #cdd2d8;
    }
    .window { display: flex; flex-direction: column; flex: 1; padding: 0 4px; border-top: 1px solid #14608c; border-bottom: 1px solid #14608c;
      background:
        linear-gradient(#10599a 0 35px, #e4eef3 35px) 0 0 / 3px 100% no-repeat,
        linear-gradient(#10599a 0 35px, #e4eef3 35px) 100% 0 / 3px 100% no-repeat,
        linear-gradient(#11508a, #11508a) 3px 0 / 1px 100% no-repeat,
        linear-gradient(#11508a, #11508a) calc(100% - 3px) 0 / 1px 100% no-repeat,
        #161d28;
    }
    header { display: flex; align-items: center; height: 30px; padding-bottom: 2px; }
    .quick { display: flex; align-items: center; width: 130px; padding-left: 8px; }
    .quick .menu { margin: 0 18px 0 5px; }
    .quick .batch { margin: 0 7px; }
    h1 { flex: 1; margin: 0; text-align: center; font-size: 12px; line-height: 16px; font-weight: 400; color: #d5d9de; white-space: pre; }
    .controls { display: flex; align-items: center; justify-content: flex-end; gap: 13px; width: 109px; padding-right: 10px; }
    nav { display: flex; align-items: flex-end; gap: 22px; height: 24px; padding-left: 7px; }
    .home { padding: 0 10px; height: 21px; background: #303a4a; color: #d3d8de; }
    .collapse { height: 19px; gap: 4px; }
    .files { display: flex; align-items: flex-end; height: 28px; padding-left: 23px; }
    .start { display: flex; justify-content: flex-start; width: 137px; height: 23px; padding-left: 14px; background: #2b3441; color: #b9bfc7;
      clip-path: polygon(6% 0, 93% 0, 97% 20%, 100% 100%, 0 100%, 4% 20%); }
    .add { width: 22px; height: 23px; margin-left: 3px; }
    .edge { height: 4px; margin: 0 4px; background: #343d4a; }
    .canvas { position: relative; flex: 1; min-height: 0; background: #151c28; }
    floor-plan { position: absolute; inset: 0; }
    command-line { position: absolute; left: 288px; right: 288px; bottom: 35px; height: 92px; }
    .doc { position: absolute; right: 15px; top: 9px; display: flex; align-items: center; gap: 9px; }
    .compass { position: absolute; right: 16px; top: 34px; }
    .wcs { position: absolute; right: 46px; top: 153px; width: 50px; height: 17px; padding-left: 4px; justify-content: flex-start; border-radius: 4px; background: #8c8f97; color: #646870; font-size: 11px; }
    .navbar { position: absolute; right: 6px; top: 195px; width: 35px; height: 210px; border-radius: 4px; background: #4b545e; }
    text { font-family: "Liberation Sans", Arial, sans-serif; font-weight: 700; }
  `];
  render() {
    return html`
      <main class="window">
        <header>
          <div class="quick">
            <button aria-label="Application menu"><svg width="16" height="18" viewBox="0 0 16 18"><path d="M1 1h6c11 0 10 15 0 15H1z" fill="#e2452f" /><path d="M5 5h2c5 0 5 8 0 8H5z" fill="#3a1a1b" /><path d="M1 1l4 4v8l-4 3z" fill="#b93022" /></svg></button>
            <button class="menu" aria-label="Menu">${caret}</button>
            <button aria-label="Open"><svg width="18" height="14" viewBox="0 0 18 14"><path d="M1 1h6l1 2h6v3H5l-3 7H1z" fill="#6d737b" /><path d="M6 6h12l-4 7H3z" fill="#888e95" /></svg></button>
            <button class="batch" aria-label="Convert"><svg width="18" height="17" viewBox="0 0 18 17"><path d="M5 4h8v12H5z" fill="#5c636c" /><path d="M1 1h9v11H1z" fill="#858b92" stroke="#161d28" /><path d="M3 4h5M3 7h5M3 9h5" stroke="#333b46" /><path d="M12 1q-3 3 0 6M14 1q4 3 0 6" fill="none" stroke="#555e69" stroke-width="2" /></svg></button>
            <button aria-label="Customize toolbar"><svg width="9" height="8" viewBox="0 0 9 8"><path d="M0 1h9" stroke="#aab0b7" stroke-width="1.500" /><path d="M0 3h9L4.500 8z" fill="#aab0b7" /></svg></button>
          </div>
          <h1>Autodesk DWG TrueView 2022    Parking Pavilion 2 Basement Floor.DWG</h1>
          <div class="controls">
            <button aria-label="Minimize"><svg width="9" height="12" viewBox="0 0 9 12"><path d="M0 11h9" stroke="#e6e8ea" stroke-width="2" /></svg></button>
            <button aria-label="Maximize"><svg width="14" height="12" viewBox="0 0 14 12"><path d="M1 1h12v10H1z" fill="none" stroke="#c8ccd0" stroke-width="1.300" /><path d="M0 1h14" stroke="#d8dbde" stroke-width="2" /></svg></button>
            <button aria-label="Close"><svg width="12" height="12" viewBox="0 0 12 12"><path d="M1 1l10 10M11 1L1 11" stroke="#e6e8ea" stroke-width="2.400" /></svg></button>
          </div>
        </header>
        <nav>
          <button class="home">Home</button>
          <button class="collapse" aria-label="Collapse ribbon"><svg width="16" height="10" viewBox="0 0 16 10"><path d="M0 0h16v10H0z" fill="#eceef0" /><path d="M5 7h6L8 4z" fill="#3d4754" /></svg>${caret}</button>
        </nav>
        <ribbon-bar></ribbon-bar>
        <div class="files">
          <button class="start">Start</button>
          <button class="add" aria-label="New tab"><svg width="22" height="14" viewBox="0 0 22 14"><path d="M0 0h17l5 14H5z" fill="#232c38" /><path d="M6 7h9M10.500 3v8" stroke="#b6bcc4" stroke-width="2" /></svg></button>
        </div>
        <div class="edge"></div>
        <div class="canvas">
          <floor-plan></floor-plan>
          <div class="doc">
            <button aria-label="Minimize drawing"><svg width="11" height="12" viewBox="0 0 11 12"><path d="M0 9h11" stroke="#eceef0" stroke-width="3" /></svg></button>
            <button aria-label="Restore drawing"><svg width="12" height="12" viewBox="0 0 12 12"><path d="M4 3V1h7v7H9" fill="none" stroke="#b9bec4" stroke-width="1.500" /><path d="M2 4h6v6H2z" fill="none" stroke="#eceef0" stroke-width="2.400" /></svg></button>
            <button aria-label="Close drawing"><svg width="11" height="12" viewBox="0 0 11 12"><path d="M1 1l9 10M10 1L1 11" stroke="#eceef0" stroke-width="2.600" /></svg></button>
          </div>
          <svg class="compass" width="108" height="108" viewBox="0 0 108 108" role="img" aria-label="View cube">
            <circle cx="54" cy="53" r="43" fill="none" stroke="#343e4a" stroke-width="10" />
            <g fill="#b3b7bc" font-size="16" text-anchor="middle">
              <path d="M45 3h16v14H45zM46 92h15v12H46zM2 46h16v14H2zM90 46h16v14H90z" fill="#202934" />
              <text x="53" y="16">N</text><text x="53" y="103">S</text><text x="8" y="60">W</text><text x="99" y="60">E</text></g>
            <path d="M33 33h41v41H33z" fill="#a5a8af" /><path d="M42 42h23v23H42z" fill="#9da0a5" />
            <text x="53" y="56" font-size="9" text-anchor="middle" fill="#4c5158">TOP</text>
          </svg>
          <button class="wcs">WCS</button>
          <svg class="navbar" viewBox="0 0 35 210" role="img" aria-label="Navigation bar">
            <g fill="none" stroke="#3d4651" stroke-width="1.300">
              <circle cx="18" cy="30" r="11" /><circle cx="18" cy="30" r="6" /><path d="M12 19h15M28 4l3 3M31 4l-3 3M16 50h4" />
              <path d="M12 62h6v9h-6M20 60c8 4 8 12 0 16M12 66h8M11 82h10" />
              <path d="M6 90l18 18M22 90L7 105" /><circle cx="22" cy="103" r="6" /><path d="M26 108l4 4M16 119h4" />
              <path d="M18 126v22M8 142h18M10 136c4-5 12-5 15 0v8c-4 5-10 5-14 0zM16 157h4" />
              <path d="M8 174h16v16H8zM12 178l6 5-6 3zM20 168h6v8M28 204l4-5" />
            </g>
          </svg>
          <command-line></command-line>
        </div>
      </main>
      <task-bar></task-bar>`;
  }
}
